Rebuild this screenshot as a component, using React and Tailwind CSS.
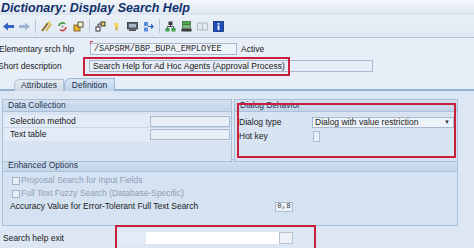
import React from "react";

const red = "border-2 border-[#c8203a]";

function Icon({ children }) {
  return (
    <svg width="11" height="11" viewBox="0 0 11 11" className="shrink-0">
      {children}
    </svg>
  );
}

function Sep() {
  return <div className="w-px h-[14px] bg-[#b7c6d8]" />;
}

function Toolbar() {
  return (
    <div className="h-[22px] flex items-center pl-[3px] gap-[5px] bg-gradient-to-b from-[#eaf0f7] to-[#dfe8f2]">
      <Icon>
        <path d="M0 5.5 L5 1.5 V4 H11 V7 H5 V9.5 Z" fill="#2f63c4" />
      </Icon>
      <Icon>
        <path d="M11 5.5 L6 1.5 V4 H0 V7 H6 V9.5 Z" fill="#9fb4d2" />
      </Icon>
      <Sep />
      <Icon>
        <path d="M1 10 L7 2" stroke="#8a6a2c" strokeWidth="2" />
        <path d="M5 10 L10 3" stroke="#d8b24a" strokeWidth="2" />
        <circle cx="8" cy="2" r="1.4" fill="#e4c55a" />
      </Icon>
      <Icon>
        <path d="M2 5 A3.5 3.5 0 0 1 8 3" stroke="#3c9a3c" strokeWidth="1.6" fill="none" />
        <path d="M9 6 A3.5 3.5 0 0 1 3 8.5" stroke="#c83a3a" strokeWidth="1.6" fill="none" />
        <circle cx="5.5" cy="5.5" r="1" fill="#7a7a7a" />
      </Icon>
      <Icon>
        <rect x="1" y="4" width="6" height="6" fill="#f0b030" stroke="#6b4e12" strokeWidth="0.8" />
        <rect x="5" y="1" width="5" height="5" fill="#fff6c8" stroke="#2c2c2c" strokeWidth="0.8" />
      </Icon>
      <Sep />
      <Icon>
        <rect x="1" y="6" width="4" height="4" fill="#fff" stroke="#222" strokeWidth="0.9" />
        <rect x="6" y="1" width="4" height="4" fill="#f4d060" stroke="#222" strokeWidth="0.9" />
        <path d="M3 6 V3 H6" stroke="#222" strokeWidth="0.9" fill="none" />
      </Icon>
      <Icon>
        <circle cx="5.5" cy="4" r="2.2" fill="#f4d35a" />
        <rect x="4.6" y="6" width="1.8" height="3.5" fill="#c9a030" />
      </Icon>
      <Icon>
        <rect x="0.5" y="1.5" width="10" height="6.5" fill="#5b6470" stroke="#2e343c" strokeWidth="0.8" />
        <rect x="2" y="3" width="7" height="3.5" fill="#a9b6c6" />
        <rect x="2" y="8.5" width="7" height="1.5" fill="#444" />
      </Icon>
      <Icon>
        <rect x="1" y="1" width="4" height="4" fill="#5b8ed8" />
        <rect x="1" y="6.5" width="4" height="4" fill="#5b8ed8" />
        <path d="M5 5.5 H10 M8 3.5 L10 5.5 L8 7.5" stroke="#2c5eb8" strokeWidth="1.2" fill="none" />
      </Icon>
      <Sep />
      <Icon>
        <rect x="3.5" y="0.5" width="4" height="3.5" fill="#3a3a3a" />
        <rect x="0.5" y="7" width="4" height="3.5" fill="#3aa04a" />
        <rect x="6.5" y="7" width="4" height="3.5" fill="#3aa04a" />
        <path d="M5.5 4 V5.5 M2.5 7 V5.5 H8.5 V7" stroke="#222" strokeWidth="0.8" fill="none" />
      </Icon>
      <Icon>
        <rect x="1.5" y="0.5" width="8" height="3" fill="#4aa84a" stroke="#255a25" strokeWidth="0.6" />
        <rect x="1.5" y="4" width="8" height="3" fill="#8ac88a" stroke="#255a25" strokeWidth="0.6" />
        <rect x="0.5" y="7.5" width="10" height="3" fill="#3a3a3a" />
      </Icon>
      <Icon>
        <rect x="0.5" y="2" width="10" height="7" fill="#e3e8ee" stroke="#a4adb8" strokeWidth="0.8" />
        <path d="M5.5 2 V9" stroke="#a4adb8" strokeWidth="0.8" />
      </Icon>
      <Icon>
        <rect x="0.5" y="0.5" width="10" height="10" fill="#1e4fb8" stroke="#0e2f7a" strokeWidth="0.8" />
        <rect x="4.6" y="2" width="1.8" height="1.6" fill="#fff" />
        <rect x="4.6" y="4.4" width="1.8" height="4.6" fill="#fff" />
      </Icon>
    </div>
  );
}

function Field({ className = "" }) {
  return <div className={`h-[11px] bg-[#e8eff7] border border-[#a9bad0] ${className}`} />;
}

function GroupHeader({ children }) {
  return (
    <div className="h-[12px] flex items-center pl-[5px] bg-gradient-to-b from-[#d3e0ee] to-[#c4d5e9] border-b border-[#aabfd8] text-[#1f3556]">
      {children}
    </div>
  );
}

function CheckRow({ children }) {
  return (
    <div className="h-[13px] flex items-center pl-[9px] text-[#8fa0b6]">
      <div className="w-[8px] h-[8px] border border-[#a3b2c6] bg-[#e6edf5] mr-[1px]" />
      {children}
    </div>
  );
}

export default function App() {
  return (
    <div className="w-[474px] h-[248px] overflow-hidden bg-[#dce7f3] text-[8.5px] leading-none text-[#1a1a1a] font-['Liberation_Sans',Arial,sans-serif]">
      {/* Title */}
      <div className="h-[15px] flex items-end pl-[1px] pb-[1px] bg-gradient-to-b from-[#f4f7fb] to-[#dbe5f0]">
        <span className="text-[12.5px] font-bold italic text-[#12306a]">
          Dictionary: Display Search Help
        </span>
      </div>

      <Toolbar />

      {/* Header fields */}
      <div className="h-[52px] bg-[#e7eef7] border-t border-[#b2c3d7] pt-[4px]">
        <div className="h-[14px] flex items-center">
          <div className="w-[91px] -ml-[1px]">Elementary srch hlp</div>
          <div className="relative w-[147px] h-[12px] bg-[#eef3f9] border border-[#a9bad0] flex items-center pl-[3px] font-['Liberation_Mono',monospace] text-[8.5px] text-[#2a2a2a]">
            /SAPSRM/BBP_BUPA_EMPLOYEE
            <div className="absolute -top-[3px] -left-px w-[3px] h-[3px] border-t border-l border-[#d04050]" />
          </div>
          <div className="ml-[4px]">Active</div>
        </div>
        <div className="h-[3px]" />
        <div className="relative h-[14px] flex items-center">
          <div className="w-[91px] -ml-[2px]">Short description</div>
          <div className="w-[284px] h-[12px] bg-[#e6edf6] border border-[#a9bad0] flex items-center pl-[3px] text-[8.5px]">
            Search Help for Ad Hoc Agents (Approval Process)
          </div>
          <div className={`absolute left-[83px] -top-[2px] w-[207px] h-[19px] ${red}`} />
        </div>
        <div className="flex items-end h-[17px] pl-[14px] mt-[1px]">
          <div className="h-[12px] w-[50px] flex items-center justify-center bg-gradient-to-b from-[#e3eaf2] to-[#cfdae6] border border-b-0 border-[#b0c0d3] rounded-tl-[6px] text-[#27364c]">
            Attributes
          </div>
          <div className="h-[13px] w-[51px] flex items-center justify-center bg-gradient-to-b from-[#d9e7f6] to-[#bcd3ec] border border-b-0 border-[#9db7d6] rounded-tl-[6px] text-[#1b2c45]">
            Definition
          </div>
        </div>
      </div>
      <div className="h-[2px] bg-[#93b2d6]" />

      {/* Panel */}
      <div className="pt-[8px] pl-[2px]">
        <div className="flex">
          <div className="w-[230px] h-[63px] border border-[#aabfd8] bg-[#d8e4f2]">
            <GroupHeader>Data Collection</GroupHeader>
            <div className="mt-[3px] mx-[1px] bg-[#e2ebf6]">
              <div className="h-[13px] flex items-center pl-[6px] border-b border-[#c9d7e8]">
                <div className="w-[140px]">Selection method</div>
                <Field className="w-[80px]" />
              </div>
              <div className="h-[13px] flex items-center pl-[6px]">
                <div className="w-[140px]">Text table</div>
                <Field className="w-[80px]" />
              </div>
            </div>
          </div>
          <div className="relative ml-[2px] w-[224px] h-[63px] border border-[#aabfd8] bg-[#d8e4f2]">
            <GroupHeader>Dialog Behavior</GroupHeader>
            <div className="mt-[3px] pl-[4px]">
              <div className="h-[14px] flex items-center">
                <div className="w-[73px]">Dialog type</div>
                <div className="w-[142px] h-[11px] bg-[#eef3f9] border border-[#a9bad0] flex items-center pl-[2px] justify-between pr-[3px]">
                  <span>Dialog with value restriction</span>
                  <span className="text-[6px] text-[#333]">▼</span>
                </div>
              </div>
              <div className="h-[14px] flex items-center">
                <div className="w-[74px]">Hot key</div>
                <div className="w-[7px] h-[11px] bg-[#e8eff7] border border-[#a9bad0]" />
              </div>
            </div>
            <div className={`absolute left-[2px] top-[3px] w-[219px] h-[55px] ${red}`} />
          </div>
        </div>

        <div className="mt-[-3px] w-[456px] h-[67px] border border-[#aabfd8] bg-[#d5e2f1]">
          <GroupHeader>Enhanced Options</GroupHeader>
          <div className="pt-[2px]">
            <CheckRow>Proposal Search for Input Fields</CheckRow>
            <CheckRow>Full Text Fuzzy Search (Database-Specific)</CheckRow>
            <div className="h-[13px] flex items-center pl-[7px]">
              <div className="w-[265px]">Accuracy Value for Error-Tolerant Full Text Search</div>
              <div className="w-[18px] h-[10px] bg-[#eef3f9] border border-[#a9bad0] flex items-center justify-center font-['Liberation_Mono',monospace] text-[7.5px] text-[#333]">
                0,8
              </div>
            </div>
          </div>
        </div>

        <div className="relative mt-[5px] h-[14px] flex items-center">
          <div className="w-[117px] pl-[1px]">Search help exit</div>
          <div className="flex items-center h-[12px]">
            <div className="w-[27px] h-[12px] bg-[#e3ecf6]" />
            <div className="w-[133px] h-[12px] bg-white" />
            <div className="w-[14px] h-[12px] bg-[#eef2f7] border border-[#b6c3d3]" />
          </div>
          <div className={`absolute left-[113px] -top-[6px] w-[201px] h-[26px] ${red}`} />
        </div>
      </div>
    </div>
  );
}
